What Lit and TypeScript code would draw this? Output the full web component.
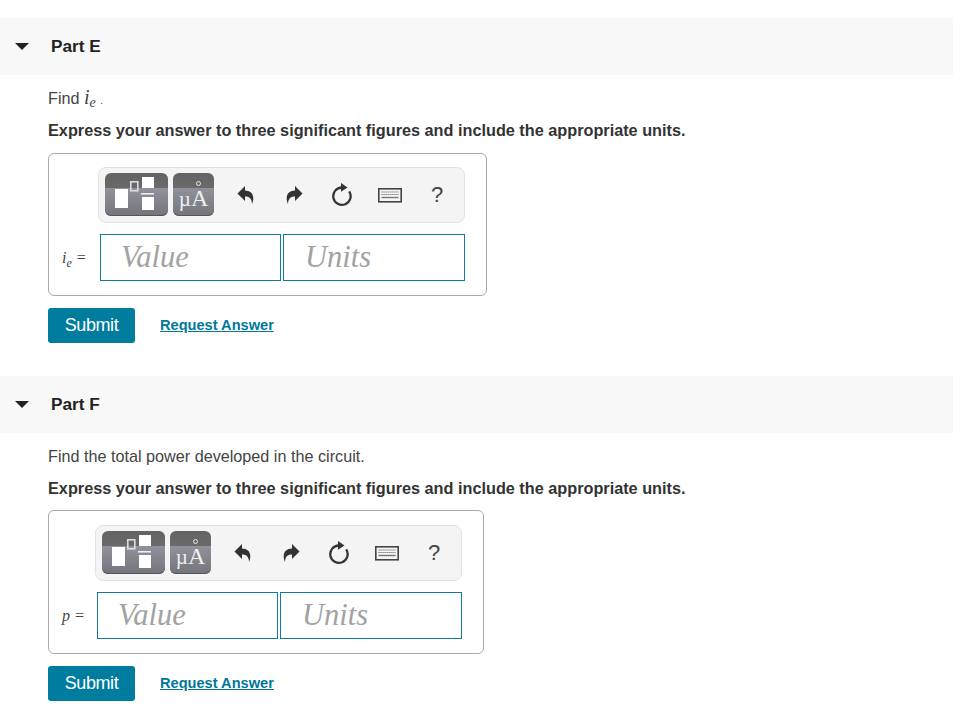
import { LitElement, html, css, svg } from 'lit';
import { customElement, property } from 'lit/decorators.js';

const undoPath = 'M0.5 8.5 L8 1 V5.5 C14.5 5.5 18.5 10.5 15 19 C14.8 14 13 11.5 8 11.5 V16 Z';

@customElement('answer-toolbar')
class AnswerToolbar extends LitElement {
  static styles = css`
    :host { display: block; }
    .bar {
      box-sizing: border-box;
      width: 367px;
      height: 56px;
      display: flex;
      align-items: center;
      padding: 0 0 1px 6px;
      background: #f4f4f4;
      border: 1px solid #e2e2e2;
      border-radius: 8px;
    }
    .tpl {
      box-sizing: border-box;
      height: 43px;
      border-radius: 6px;
      box-shadow: inset 0 -1px 0 #555;
      background: linear-gradient(#636363 0, #6a6a6a 34%, #92929c 34%, #74747c 100%);
      display: block;
    }
    .frac { width: 63px; margin-right: 5px; }
    .units {
      width: 41px;
      position: relative;
      display: flex;
      justify-content: center;
      align-items: baseline;
      padding-top: 13px;
      font-family: 'Liberation Serif', serif;
      color: #f0f0f0;
    }
    .units .mu { font-size: 21px; line-height: 24px; }
    .units .a { font-size: 24px; line-height: 24px; }
    .ring {
      position: absolute;
      left: 23px;
      top: 8px;
      width: 3px;
      height: 3px;
      border: 1px solid #e8e8e8;
      border-radius: 50%;
    }
    .tools {
      display: flex;
      align-items: center;
      margin-left: 23px;
    }
    .tools svg { display: block; }
    .redo { margin-left: 32px; }
    .reload { margin-left: 29px; }
    .keys { margin-left: 25px; }
    .help {
      font: 22px 'Liberation Sans', sans-serif;
      color: #444;
      margin-left: 29px;
    }
  `;

  render() {
    return html`
      <div class="bar">
        <div class="tpl frac">
          <svg width="63" height="43" viewBox="0 0 63 43">
            <rect x="10" y="16" width="13" height="19" fill="#fff" />
            <rect x="25.8" y="8.8" width="7" height="9" fill="none" stroke="#ddd" stroke-width="1.6" />
            <rect x="37" y="4" width="12" height="11" fill="#fff" />
            <rect x="36" y="20" width="13" height="1.6" fill="#eee" />
            <rect x="37" y="24" width="12" height="13" fill="#fff" />
          </svg>
        </div>
        <div class="tpl units"><span class="ring"></span><span class="mu">µ</span><span class="a">A</span></div>
        <div class="tools">
          <svg width="17" height="20" viewBox="0 0 17 20">
            <path d="${undoPath}" fill="#333" />
          </svg>
          <svg class="redo" width="17" height="20" viewBox="0 0 17 20">
            <path d="${undoPath}" fill="#333" transform="matrix(-1 0 0 1 17 0)" />
          </svg>
          <svg class="reload" width="21" height="24" viewBox="0 0 21 24">
            ${svg`<path d="M10 4.5 A8.7 8.7 0 1 0 17.2 8.4" fill="none" stroke="#333" stroke-width="2.3" />
              <path d="M9 0 L15.5 4.5 L9 8.7 Z" fill="#333" />`}
          </svg>
          <svg class="keys" width="24" height="16" viewBox="0 0 24 16">
            <rect x="0.8" y="1.8" width="22.4" height="13" fill="#f6f6f6" stroke="#444" stroke-width="1.6" />
            <path d="M3.5 5 H20.5 M3.5 7.5 H20.5" stroke="#666" stroke-width="1.2" stroke-dasharray="1.2 .8" />
            <path d="M3.5 10.5 H20.5" stroke="#777" stroke-width="1.4" />
          </svg>
          <span class="help">?</span>
        </div>
      </div>
    `;
  }
}

@customElement('part-section')
class PartSection extends LitElement {
  @property() part = '';
  @property() symbol = '';
  @property() sub = '';
  @property({ type: Number }) indent = 0;
  @property({ type: Number }) boxWidth = 439;
  @property({ type: Number }) boxGap = 14;
  @property({ type: Number }) boxPad = 13;

  static styles = css`
    :host {
      display: block;
      font-family: 'Liberation Sans', Arial, sans-serif;
      color: #333;
    }
    .head {
      height: 57px;
      background: #f8f8f8;
      display: flex;
      align-items: center;
    }
    .caret {
      width: 0;
      height: 0;
      margin-left: 15px;
      border-left: 7px solid transparent;
      border-right: 7px solid transparent;
      border-top: 7px solid #222;
    }
    .title {
      margin-left: 22px;
      font-size: 17.2px;
      font-weight: 700;
      color: #222;
    }
    .body { padding: 14px 0 0 48px; }
    .find {
      font-size: 16.2px;
      line-height: 18px;
      height: 18px;
      color: #444;
    }
    .hint {
      margin-top: 14px;
      font-size: 16.25px;
      line-height: 18px;
      font-weight: 700;
      color: #333;
    }
    .box {
      box-sizing: border-box;
      border: 1px solid #aaa;
      border-radius: 6px;
      background: #fff;
      padding-bottom: 14px;
    }
    .row {
      display: flex;
      align-items: center;
      margin-top: 11px;
    }
    .sym {
      box-sizing: border-box;
      padding-left: 13px;
      white-space: nowrap;
      font: 16px 'Liberation Serif', serif;
      word-spacing: 1px;
      color: #444;
    }
    .sym sub { font-size: 12px; vertical-align: -4px; line-height: 0; }
    .field {
      box-sizing: border-box;
      height: 47px;
      border: 1px solid #0e7c9b;
      background: #fff;
      font: italic 30.5px/45px 'Liberation Serif', serif;
      color: #a2a2a2;
    }
    .value { width: 181px; padding-left: 20px; margin-right: 2px; }
    .unit { width: 182px; padding-left: 21px; }
    .actions {
      display: flex;
      align-items: center;
      margin-top: 12px;
    }
    .submit {
      box-sizing: border-box;
      width: 87px;
      height: 35px;
      border: 0;
      border-radius: 3px;
      background: #007c9e;
      color: #fff;
      font: 18px 'Liberation Sans', sans-serif;
      letter-spacing: -0.4px;
      padding: 0;
    }
    .link {
      margin-left: 25px;
      font-size: 14.6px;
      line-height: 16px;
      margin-top: -1px;
      font-weight: 700;
      color: #00789a;
      text-decoration: underline;
    }
  `;

  render() {
    const pad = this.indent;
    return html`
      <div class="head">
        <div class="caret"></div>
        <div class="title">Part ${this.part}</div>
      </div>
      <div class="body">
        <div class="find"><slot></slot></div>
        <div class="hint">Express your answer to three significant figures and include the appropriate units.</div>
        <div class="box" style="width:${this.boxWidth}px;margin-top:${this.boxGap}px;padding-top:${this.boxPad}px">
          <div style="margin-left:${pad}px"><answer-toolbar></answer-toolbar></div>
          <div class="row">
            <div class="sym" style="width:${pad + 2}px"><i>${this.symbol}</i><sub><i>${this.sub}</i></sub> =</div>
            <div class="field value">Value</div>
            <div class="field unit">Units</div>
          </div>
        </div>
        <div class="actions">
          <button class="submit">Submit</button>
          <a class="link" href="#">Request Answer</a>
        </div>
      </div>
    `;
  }
}

@customElement('app-root')
class AppRoot extends LitElement {
  static styles = css`
    :host {
      display: block;
      width: 953px;
      height: 728px;
      padding-top: 18px;
      box-sizing: border-box;
      background: #fff;
      font-family: 'Liberation Sans', Arial, sans-serif;
      color: #444;
    }
    .second { margin-top: 33px; }
    .math { font: italic 20px/0 'Liberation Serif', serif; }
    .math sub { font-size: 14px; vertical-align: -3px; line-height: 0; }
    .dot { font-size: 10px; line-height: 0; }
  `;

  render() {
    return html`
      <part-section part="E" symbol="i" sub="e" indent="49" boxWidth="439" boxGap="14" boxPad="13">
        Find <span class="math">i<sub>e</sub></span> <span class="dot">.</span>
      </part-section>
      <part-section class="second" part="F" symbol="p" sub="" indent="46" boxWidth="436" boxGap="13" boxPad="14">
        Find the total power developed in the circuit.
      </part-section>
    `;
  }
}
